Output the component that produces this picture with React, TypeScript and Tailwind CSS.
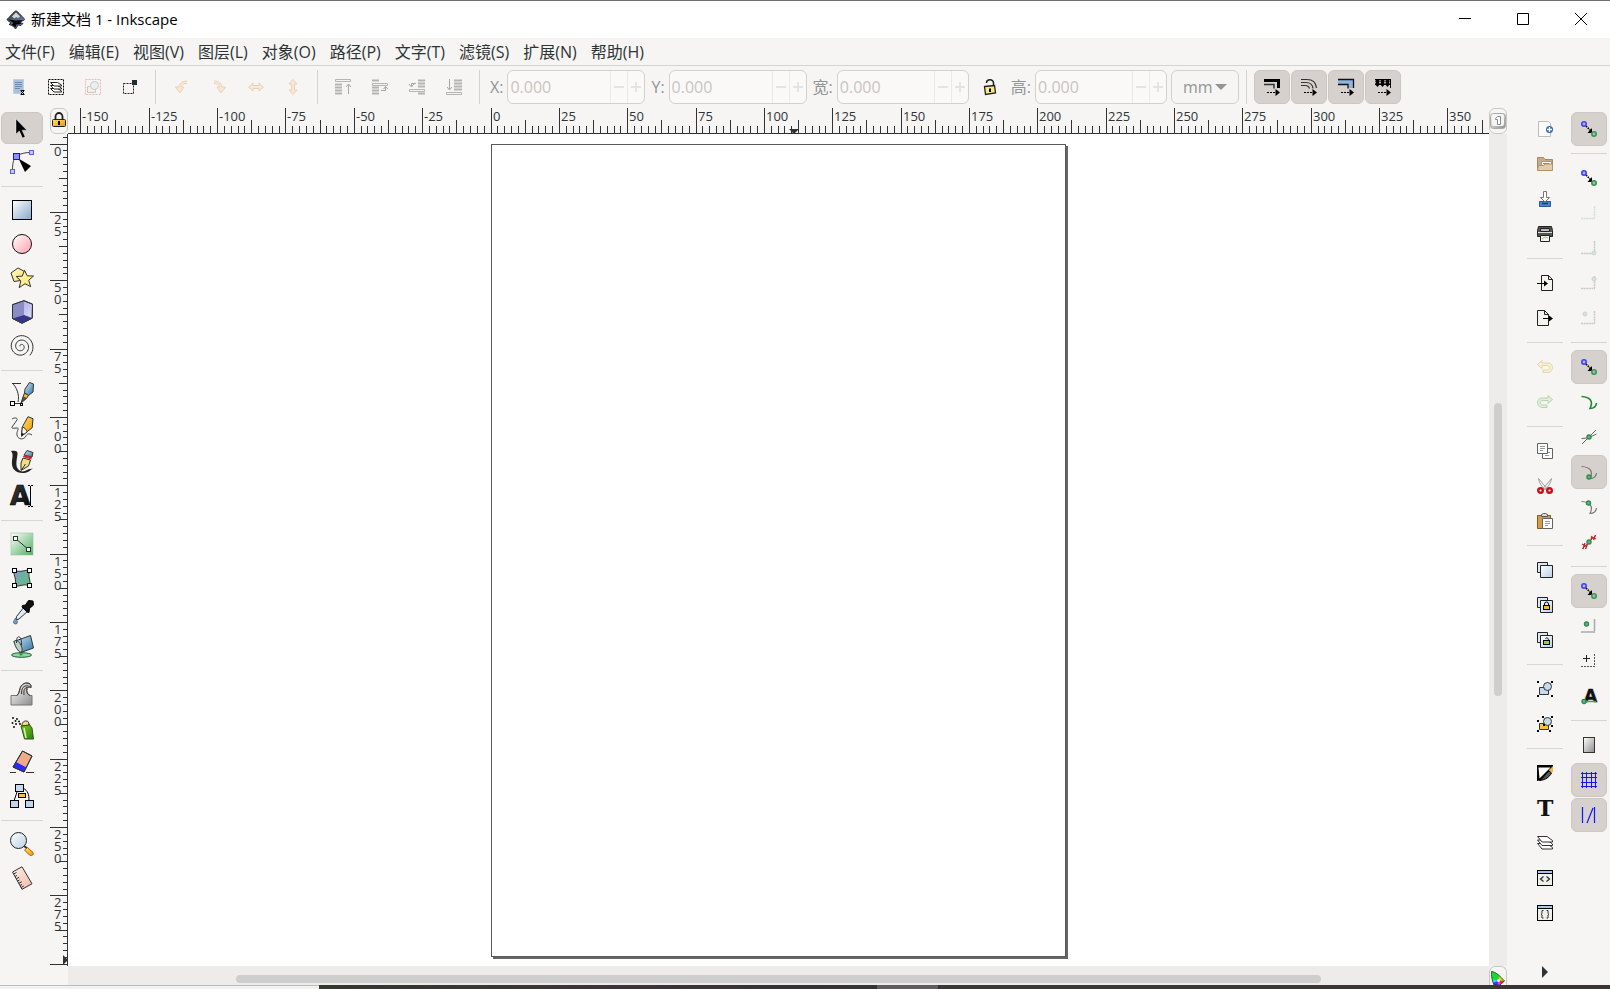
import { useLayoutEffect, useRef, useState, type ReactNode } from "react";

type Tool = { label: string; icon: ReactNode; on?: boolean; off?: boolean };

const MENUS = ["文件(F)", "编辑(E)", "视图(V)", "图层(L)", "对象(O)", "路径(P)", "文字(T)", "滤镜(S)", "扩展(N)", "帮助(H)"];

// 25 mm on screen, in pixels
const STEP = 68.35;

function spiralPath() {
  const turns = 2.6;
  const end = Math.PI / 4;
  const pts = Array.from({ length: 90 }, (_, i) => {
    const t = i / 89;
    const a = end - (1 - t) * turns * 2 * Math.PI;
    const r = 1 + 11.5 * t;
    return `${(11 + r * Math.cos(a)).toFixed(2)} ${(12.5 + r * Math.sin(a)).toFixed(2)}`;
  });
  return `M${pts.join("L")}`;
}

function Svg({ size = 16, children }: { size?: number; children: ReactNode }) {
  return (
    <svg width={size} height={size} viewBox={`0 0 ${size} ${size}`} fill="none" stroke="#2e3436" className="shrink-0 overflow-visible" aria-hidden="true">
      {children}
    </svg>
  );
}

function Gradients() {
  const list: [string, string, string][] = [
    ["blue", "#ffffff", "#85a8cc"],
    ["pink", "#ffffff", "#ff9fab"],
    ["yellow", "#fffbd0", "#ffe15a"],
    ["green", "#ffffff", "#4fae62"],
    ["teal", "#7f9fd0", "#5fbf6c"],
    ["cube", "#9a9ad6", "#e8e8ff"],
    ["gray", "#ffffff", "#8c8c8c"],
    ["bucket", "#d5ecf7", "#2f6f9f"],
    ["can", "#7ed321", "#2f7a12"],
    ["sky", "#ffffff", "#b9d0e6"],
    ["orange", "#ffe36e", "#f39200"],
    ["peach", "#fff0ea", "#f2b8a4"],
    ["ink", "#444444", "#000000"],
    ["logo", "#3a3a3a", "#6d94c4"],
  ];
  return (
    <svg className="absolute h-0 w-0" aria-hidden="true">
      <defs>
        {list.map(([id, a, b]) => (
          <linearGradient key={id} id={id} x1="0" y1="0" x2="1" y2="1">
            <stop offset="0" stopColor={a} />
            <stop offset="1" stopColor={b} />
          </linearGradient>
        ))}
      </defs>
    </svg>
  );
}

const toolGroups: Tool[][] = [
  [
    {
      label: "选择",
      on: true,
      icon: <path d="M6 3v15l3.3-3 3.2 7 2.6-1.2-3-6.600h4.700z" fill="#000" stroke="#fff" strokeWidth=".4" />,
    },
    {
      label: "节点",
      icon: (
        <>
          <path d="M2.500 20C2.500 12 4 7 8 5.200 12 3.200 16 2.500 20 2.500" stroke="#444" />
          <path d="M8.500 8.500l12.500 7.500-6 6z" fill="#000" stroke="none" />
          <rect x="3.500" y="3.500" width="6" height="6" fill="#8f8fff" stroke="#1414d8" />
          <rect x="19.500" y=".5" width="4" height="4" fill="#c4c4ff" stroke="#5a5aff" />
          <rect x=".5" y="19.500" width="4" height="4" fill="#c4c4ff" stroke="#5a5aff" />
        </>
      ),
    },
  ],
  [
    { label: "矩形", icon: <rect x="2.500" y="2.500" width="19" height="19" fill="url(#blue)" stroke="#000" /> },
    { label: "椭圆", icon: <circle cx="12" cy="12" r="9.500" fill="url(#pink)" stroke="#111" /> },
    {
      label: "星形",
      icon: (
        <>
          <path d="M8 2l7.500 4-1.500 8-10 1.500L1 7z" fill="url(#yellow)" stroke="#333" />
          <path d="M14.500 4.500l2.800 5.300 6.200.2-4.800 4.300 2 6.400-5.700-3-5.800 4 1.600-6.800-4.600-4.400 6-.4z" fill="url(#yellow)" stroke="#333" />
        </>
      ),
    },
    {
      label: "3D 盒子",
      icon: (
        <>
          <path d="M2.500 4.700L14 .7l8.500 3.500-.3 14L12 23.300 2.500 18.500z" fill="url(#cube)" />
          <path d="M3 5l11-4v14L3 18.500z" fill="#8c8cc4" stroke="none" />
          <path d="M3 18.300L14 15l8 3-10 5z" fill="#35358c" stroke="none" />
          <path d="M2.500 4.700L14 .7l8.500 3.500-.3 14L12 23.300 2.500 18.500z" />
        </>
      ),
    },
    { label: "螺旋", icon: <path d={spiralPath()} /> },
  ],
  [
    {
      label: "钢笔",
      icon: (
        <>
          <path d="M2 1.500h9M2.500 1.500C6 4 10 13 8 20M4 21.500h7" />
          <path d="M15 7L19.500.5 23.500 2l-.5 8-4.500 3.500-4-2.500z" fill="url(#bucket)" />
          <path d="M14.500 11l4 2.500-2 3-3.500-1.500z" fill="#f5b82e" />
          <path d="M13 15l-2 6 5.500-4.500" fill="#555" />
          <rect x=".5" y="19.500" width="4" height="4" fill="#fff" stroke="#000" />
          <rect x="10.500" y="21.500" width="2" height="2" fill="#fff" stroke="#000" />
        </>
      ),
    },
    {
      label: "铅笔",
      icon: (
        <>
          <path d="M2 3c3-2 6-1 5 1L2 11c-1 2 3 1 5 1 3 0-1 4 0 7 1 5 7 5 9 1 1-2 3-3 6-1" stroke="#444" />
          <path d="M11.500 20l1-9.500L18 .7l5 2-.8 9z" fill="url(#orange)" />
          <path d="M11.500 20l.8-9c2.500.5 4 2.500 5 5z" fill="#fff6dc" />
          <path d="M11.500 20l.3-3 2 1.300z" fill="#000" />
        </>
      ),
    },
    {
      label: "书法",
      icon: (
        <>
          <path d="M1 1c4-.5 7-.5 6.500 3C7 9 5 15 8 19c2 3 6 3 9 1 2-1.500 4-1 6-1.500-3 1.500-4 4-9 4.500C6 23.500 1 19 2 11c.4-4 1.500-7-1-10z" fill="#222" stroke="none" />
          <path d="M14 5l3-4.500 6 2L22 7z" fill="url(#bucket)" />
          <path d="M14 5l8 2-.8 2.500L13 7z" fill="#d5222c" stroke="none" />
          <path d="M13 8l7.500 2-2 6-7.500 4.500V13z" fill="#f9dc7a" />
          <path d="M11.500 20l4-6" />
        </>
      ),
    },
    {
      label: "文本",
      icon: (
        <>
          <text x="0" y="21" fontFamily="DejaVu Sans" fontWeight="700" fontSize="26" fill="url(#ink)" stroke="#000" strokeWidth=".7">A</text>
          <path d="M18 1.500h2M21 1.500h2M20.500 2v20M18 22.500h2M21 22.500h2" stroke="#000" />
        </>
      ),
    },
  ],
  [
    {
      label: "渐变",
      icon: (
        <>
          <rect x="1" y="1" width="22" height="22" fill="url(#green)" stroke="#8fc69a" strokeWidth=".6" />
          <path d="M6 7l12 10" />
          <rect x="3.500" y="4.500" width="4" height="4" fill="#fff" />
          <rect x="16.500" y="15.500" width="4" height="4" fill="#fff" />
        </>
      ),
    },
    {
      label: "网格",
      icon: (
        <>
          <path d="M4 4c6 3 10 0 16 0-3 6 1 10 0 16-6-3-10 1-16 0 4-6-1-10 0-16z" fill="url(#teal)" />
          {[[2.5, 2.5], [17.5, 2.5], [2.5, 17.5], [17.5, 17.5]].map(([x, y]) => (
            <rect key={`${x}-${y}`} x={x} y={y} width="4" height="4" fill="#fff" stroke="#000" />
          ))}
        </>
      ),
    },
    {
      label: "取色器",
      icon: (
        <>
          <path d="M14 7l4 4L9 19l-3 1 .5-3.500z" fill="#dcebf7" />
          <path d="M12.500 5.500l3-.5 3-4.500 4.500.5.500 4-4 3.500-.5 4-2-.5-5-5z" fill="#111" stroke="#000" />
          <path d="M5.500 18c-1 2-2 3-2 4a2 2 0 0 0 4 0c0-1-1-2-2-4z" fill="#6f9ed0" stroke="#456" strokeWidth=".7" />
        </>
      ),
    },
    {
      label: "填充",
      icon: (
        <>
          <ellipse cx="11.500" cy="21" rx="10" ry="2.300" fill="#8fd6a0" stroke="#1f5f2d" />
          <path d="M8 15c2 1 2 3 2 6h2c0-3 1-3 1-4" fill="#5dbb70" stroke="#1f5f2d" strokeWidth=".7" />
          <path d="M4 7.500L20.500 1.500 23.500 14 11 18.500z" fill="url(#bucket)" />
          <path d="M4 7.500c1-1.500 4-1.500 6 2s3 7 1 9c-3-1-6-6-7-11z" fill="#b7d2c0" />
          <path d="M6.500 9c0-5 1-7 3-6s2 5 2 8" />
        </>
      ),
    },
  ],
  [
    {
      label: "微调",
      icon: (
        <>
          <path d="M1 13.500h5.500c2.500-1 2.500-4 3.500-7C11 3 14 .8 17 1c3 0 4.500 2 4 4.500-1.500-1-3.500-.5-4 1-.8 3 .5 6 3 7h2V23H1z" fill="url(#gray)" stroke="#777" />
          <path d="M6.500 13.500c2.500-1 2.500-4 3.500-7C11 3 14 .8 17 1c3 0 4.500 2 4 4.500-1.500-1-3.500-.5-4 1-.8 3 .5 6 3 7M11.500 12c0-6 2-9 7-8M14 13c-.5-5 .5-7 3-7.500" stroke="#333" />
        </>
      ),
    },
    {
      label: "喷绘",
      icon: (
        <>
          <path d="M11 10l8-2 3 4 1.500 11h-9z" fill="url(#can)" stroke="#2a5a18" />
          <path d="M12 10c0-4 2-5 4-5s3 1 3 4z" fill="#f5d68a" />
          <path d="M14 12l2 10" stroke="#d8f5b8" strokeWidth="1.500" />
          {[[3, 2], [7, 3], [2.5, 7], [5.5, 5], [9, 5.5], [6, 8], [4, 11], [10, 8]].map(([x, y]) => (
            <circle key={`${x}-${y}`} cx={x} cy={y} r="1" fill="#111" stroke="none" />
          ))}
        </>
      ),
    },
    {
      label: "橡皮",
      icon: (
        <>
          <path d="M12.500 1L22 6l-8 16-11-5z" fill="#f0a98a" />
          <path d="M6 12l10.500 5.500L13.500 22 3 17z" fill="#2a2aff" stroke="none" />
          <path d="M12.500 1L22 6l-8 16-11-5zM0 22.500h6M16 22.500h8" />
        </>
      ),
    },
    {
      label: "连接器",
      icon: (
        <>
          <path d="M7 8L4 17M13 4c5 3 6 6 6 13" stroke="#000" />
          <rect x="5.500" y=".5" width="8" height="7" fill="#c8dbec" stroke="#000" />
          <rect x="8.500" y="9.500" width="7" height="4" fill="#f7c040" stroke="#000" />
          <rect x=".5" y="16.500" width="8" height="7" fill="#bcd4ee" stroke="#000" />
          <rect x="15.500" y="16.500" width="8" height="7" fill="#bcd4ee" stroke="#000" />
        </>
      ),
    },
  ],
  [
    {
      label: "缩放",
      icon: (
        <>
          <path d="M14 14l4 3" strokeWidth="2" />
          <path d="M14.500 18l3-2.500 5.500 5c1 2-1 3.500-3 3z" fill="url(#orange)" stroke="#a85c00" />
          <circle cx="8.500" cy="8.500" r="8" fill="url(#sky)" stroke="#222" />
        </>
      ),
    },
    {
      label: "测量",
      icon: (
        <path d="M2.500 6L12 .8l10 17L12 23.300zM3.500 8l3-1.500M5 10.500l2-1M6.200 12.800l3-1.500M7.500 15l2-1M8.800 17.300l3-1.500M10 19.500l2-1M11.200 21.500l2.500-1.500" fill="url(#peach)" />
      ),
    },
  ],
];

const UNDO = "M.5 5.500L5 1.500v2.500h6c6 0 6 9.500-.5 9.500H6v-2.500h4.500c3 0 3-4.500 0-4.500H5v3z";

const commandGroups: Tool[][] = [
  [
    {
      label: "新建",
      icon: (
        <>
          <path d="M1.500.5h10l2 2v13h-12z" fill="#fbfbfa" stroke="#bcbcb8" />
          <circle cx="12.500" cy="8.500" r="3.500" fill="#2f66ad" stroke="none" />
          <path d="M10 8.500h5M12.500 6v5" stroke="#fff" strokeWidth="1.400" />
        </>
      ),
    },
    {
      label: "打开",
      icon: (
        <>
          <path d="M.5 14V1.500h6l1.500 2h7.500V14z" fill="#c8ab84" stroke="#a68a63" />
          <path d="M4.500 9V5.500h10V9" fill="#fff" stroke="#999" />
          <path d="M6 7.500h6" stroke="#888" />
          <path d="M.5 14.500l1-5h5l1.500-1.500h7.500v6.500z" fill="#e6cba8" stroke="#b2936b" />
        </>
      ),
    },
    {
      label: "保存",
      icon: (
        <>
          <path d="M2.500 10.500h11v5h-11z" fill="#4a86cf" stroke="#285b9b" />
          <path d="M5 12.500h6" stroke="#163a68" strokeWidth="1.500" />
          <path d="M6.500.5h3v6h3l-4.500 4.500-4.500-4.500h3z" fill="#fff" stroke="#777" />
        </>
      ),
    },
    {
      label: "打印",
      icon: (
        <>
          <path d="M1.500.5h13l1 4v6h-15v-6z" fill="#555" stroke="#222" />
          <path d="M3.500 2.500h9v3h-9z" fill="#bbb" stroke="#222" />
          <path d="M1 6.500h14" stroke="#ddd" />
          <path d="M3.500 9.500h9v6h-9z" fill="#f1f7ea" stroke="#222" />
          <path d="M5 13l3-2 3 1" stroke="#9cc47c" />
        </>
      ),
    },
  ],
  [
    {
      label: "导入",
      icon: (
        <>
          <path d="M4.500.5h7l4 4v11h-11z" fill="#f4f4ee" stroke="#222" />
          <path d="M11.500.5v4h4" stroke="#222" />
          <path d="M0 8.500h8" stroke="#000" />
          <path d="M7 5.500l4 3-4 3z" fill="#000" stroke="none" />
        </>
      ),
    },
    {
      label: "导出",
      icon: (
        <>
          <path d="M.5.500h7l4 4v11h-11z" fill="#f4f4ee" stroke="#222" />
          <path d="M7.500.5v4h4" stroke="#222" />
          <path d="M6 8.500h8" stroke="#000" />
          <path d="M12 5.500l4 3-4 3z" fill="#000" stroke="none" />
        </>
      ),
    },
  ],
  [
    { label: "撤消", off: true, icon: <path d={UNDO} stroke="#d0a520" fill="#fbeab0" /> },
    { label: "重做", off: true, icon: <path d={UNDO} transform="matrix(-1 0 0 1 16 0)" stroke="#5aa342" fill="#c8e8b8" /> },
  ],
  [
    {
      label: "复制",
      icon: (
        <>
          <path d="M5.500 5.500h10v10h-10z" fill="#fff" stroke="#5e6662" />
          <path d="M8 9.500h5M8 12.500h4" stroke="#999" />
          <path d="M.5.500h10v10H.5z" fill="#fff" stroke="#5e6662" />
          <path d="M3 3.500h5M3 5.500h5M3 7.500h3" stroke="#999" />
        </>
      ),
    },
    {
      label: "剪切",
      icon: (
        <>
          <path d="M1.500.5l8 9.500-1.500 1.500C5 9 2 5 1.500.500zM14.500.5l-8 9.500L8 11.500c3-2.500 6-6.500 6.500-11z" fill="#f2f2f2" stroke="#8b8b8b" strokeWidth=".8" />
          <circle cx="3.500" cy="12.500" r="2.300" stroke="#cc0f1c" strokeWidth="2.400" />
          <circle cx="12.500" cy="12.500" r="2.300" stroke="#cc0f1c" strokeWidth="2.400" />
        </>
      ),
    },
    {
      label: "粘贴",
      icon: (
        <>
          <path d="M.5 2.500h13v13H.500z" fill="#d99a45" stroke="#8a5a1a" />
          <path d="M4.500 3.500v-2l2-1h2l2 1v2z" fill="#ddd" stroke="#555" />
          <path d="M5.500 5.500h10v10h-10z" fill="#fff" stroke="#5e6662" />
          <path d="M8 8.500h5M8 10.500h5M8 12.500h3" stroke="#999" />
        </>
      ),
    },
  ],
  [
    { label: "再制", icon: <Stacked /> },
    {
      label: "克隆",
      icon: (
        <>
          <Stacked />
          <path d="M7.500 9.500V7a2 2 0 0 1 4 0v2.500" stroke="#000" />
          <rect x="6.500" y="8.500" width="6" height="4" fill="#f7b52c" stroke="#000" />
        </>
      ),
    },
    {
      label: "取消克隆",
      icon: (
        <>
          <Stacked />
          <path d="M8.500 6.500c1.500-1.500 3 0 3 2" stroke="#000" />
          <rect x="6.500" y="8.500" width="6" height="4" fill="#8fd14f" stroke="#000" />
        </>
      ),
    },
  ],
  [
    {
      label: "组合",
      icon: (
        <>
          <path d="M2.500 6.500h9v7h-9z" fill="#c8dbec" />
          <circle cx="10.500" cy="5.500" r="4" fill="#c8dbec" />
          <Handles pts={[[0, 0], [14, 0], [0, 14], [14, 14]]} />
        </>
      ),
    },
    {
      label: "解除组合",
      icon: (
        <>
          <path d="M2.500 7.500h9v6h-9z" fill="#f9c33a" />
          <circle cx="10.500" cy="5.500" r="4" fill="#c8dbec" />
          <Handles pts={[[5, 0], [14, 0], [0, 4], [14, 9], [0, 14], [12, 14], [6, 8]]} />
        </>
      ),
    },
  ],
  [
    {
      label: "填充和描边",
      icon: (
        <>
          <path d="M0 0h16v3L5 15l-5 1z" fill="#000" stroke="none" />
          <path d="M1.500 2.500h12L2.500 13.500z" fill="#fff" stroke="none" />
          <path d="M16 1v6l-3 1-1-3z" fill="#f6b73c" stroke="none" />
          <path d="M12 6l2.500 2c-2 4-6 7-12 7.500 4-2 5-6 9.500-9.500z" fill="#555" stroke="#000" />
        </>
      ),
    },
    {
      label: "文字和字体",
      icon: <text x="0" y="16" fontFamily="DejaVu Serif" fontWeight="700" fontSize="22" fill="#111" stroke="none">T</text>,
    },
    {
      label: "图层",
      icon: (
        <>
          {[8.5, 5, 1.5].map((y) => (
            <path key={y} d={`M.5 ${y}h9.500l5.500 4v1.500H5z`} fill="#fff" stroke="#333" />
          ))}
        </>
      ),
    },
    {
      label: "XML 编辑器",
      icon: (
        <>
          <WindowFrame />
          <path d="M6.500 6.500l-3 2.500 3 2.500M9.500 6.500l3 2.500-3 2.500" strokeWidth="1.300" />
        </>
      ),
    },
    {
      label: "选择器和 CSS",
      icon: (
        <>
          <WindowFrame />
          <path d="M6.500 5.500h-1.500v3l-1 .8 1 .7v3h1.500M9.500 5.500H11v3l1 .8-1 .7v3H9.500" />
        </>
      ),
    },
  ],
];

const snapGroups: Tool[][] = [
  [{ label: "启用捕捉", on: true, icon: <SnapMain /> }],
  [
    { label: "捕捉边界框", icon: <SnapMain /> },
    { label: "捕捉边", off: true, icon: <path d="M0 13.500h14M13.500 1v12" stroke="#8fd09a" strokeWidth="1.500" strokeDasharray="2 .6" /> },
    { label: "捕捉角", off: true, icon: <DashCorner cx={13} cy={13} /> },
    { label: "捕捉边中点", off: true, icon: <DashCorner cx={13} cy={4} /> },
    { label: "捕捉中心", off: true, icon: <DashCorner cx={4} cy={4} /> },
  ],
  [
    { label: "捕捉节点", on: true, icon: <SnapMain /> },
    {
      label: "捕捉路径",
      icon: <path d="M.5 2.500c9 .5 12 5 8.500 12 4 0 6-2 6.500-5.500" stroke="#1f8a2c" strokeWidth="1.600" />,
    },
    {
      label: "捕捉路径交点",
      icon: (
        <>
          <path d="M1 15L15 1M.5 9.500c6 0 10-2 15-4.500" stroke="#666" />
          <Dot x={8} y={8} />
        </>
      ),
    },
    {
      label: "捕捉尖锐节点",
      on: true,
      icon: (
        <>
          <path d="M.5 2.500c9 .5 12 5 8.500 12 4 0 6-2 6.500-5.500" stroke="#777" strokeWidth="1.200" />
          <Dot x={8} y={13} />
        </>
      ),
    },
    {
      label: "捕捉平滑节点",
      icon: (
        <>
          <path d="M.5 2.500c9 .5 12 5 8.500 12 4 0 6-2 6.500-5.500" stroke="#777" strokeWidth="1.200" />
          <Dot x={7.5} y={4} />
        </>
      ),
    },
    {
      label: "捕捉线段中点",
      icon: (
        <>
          <path d="M1 15L15 1" stroke="#777" />
          <path d="M2 15l2-6M4.500 15l2-5M10 6l1-4M12.500 6l2-5M1 10l5 3M10 3l5 2" stroke="#cc1b22" strokeWidth="1.300" />
          <Dot x={8} y={8} />
        </>
      ),
    },
  ],
  [
    { label: "捕捉其他点", on: true, icon: <SnapMain /> },
    {
      label: "捕捉对象中心",
      icon: (
        <>
          <path d="M0 14h14M13.500 1v12" stroke="#aaa" strokeWidth="1.500" />
          <Dot x={5.5} y={6} />
        </>
      ),
    },
    {
      label: "捕捉旋转中心",
      icon: (
        <>
          <path d="M0 13.500h14M13.500 1v12" stroke="#555" strokeDasharray="2 1" />
          <path d="M2 5.500h7M5.500 2v7" stroke="#222" />
        </>
      ),
    },
    {
      label: "捕捉文字基线",
      icon: (
        <>
          <text x="3" y="14" fontFamily="DejaVu Sans" fontWeight="700" fontSize="17" fill="#111" stroke="#111" strokeWidth=".5">A</text>
          <path d="M4 13.500h11" stroke="#4aa457" strokeWidth="1.500" />
          <Dot x={3} y={13.5} />
        </>
      ),
    },
  ],
  [
    { label: "捕捉页面边界", icon: <rect x="2.500" y=".5" width="11" height="15" fill="url(#gray)" stroke="#333" /> },
    { label: "捕捉网格", on: true, icon: <path d="M1.500 0v16M5.500 0v16M10.500 0v16M14.500 0v16M0 1.500h16M0 5.500h16M0 10.500h16M0 14.500h16" stroke="#1414ff" /> },
    { label: "捕捉参考线", on: true, icon: <path d="M1.500 0v16M13.500 0v16M6 16L12 1" stroke="#1414ff" strokeWidth="1.200" /> },
  ],
];

function Stacked() {
  return (
    <>
      <path d="M.5.500h10v10H.5z" fill="#dbe7f2" stroke="#222" />
      <path d="M3.500 3.500h12v12h-12z" fill="url(#sky)" stroke="#222" />
    </>
  );
}

function Handles({ pts }: { pts: number[][] }) {
  return pts.map(([x, y]) => <rect key={`${x}-${y}`} x={x} y={y} width="2" height="2" fill="#000" stroke="none" />);
}

function WindowFrame() {
  return (
    <>
      <rect x=".5" y=".5" width="15" height="15" fill="#f0f0ea" stroke="#000" />
      <rect x="1" y="1" width="14" height="2" fill="#a9c4e4" stroke="none" />
      <path d="M1 3.500h14" stroke="#000" />
    </>
  );
}

function Dot({ x, y }: { x: number; y: number }) {
  return <circle cx={x} cy={y} r="2" fill="#7d9ad0" stroke="#27923a" strokeWidth="1.400" />;
}

function DashCorner({ cx, cy }: { cx: number; cy: number }) {
  return (
    <>
      <path d="M0 13.500h14M13.500 1v12" stroke="#8a8a8a" strokeWidth="1.500" strokeDasharray="2 .6" />
      <circle cx={cx} cy={cy} r="2" fill="#a8c8c0" stroke="#6fb583" />
    </>
  );
}

function SnapMain() {
  return (
    <>
      <path d="M5 5l5 5" stroke="#000" strokeWidth="1.600" strokeDasharray="1.500 1" />
      <path d="M11 7v5H6.500z" fill="#000" stroke="none" />
      <circle cx="3" cy="3" r="2.200" fill="#a9b4ff" stroke="#4040f0" strokeWidth="1.600" />
      <circle cx="13" cy="13" r="2.200" fill="#9fb6d8" stroke="#37984a" strokeWidth="1.600" />
    </>
  );
}

const arrowRow = (
  <>
    <path d="M3 13.500h9" stroke="#000" strokeDasharray="2 1" />
    <path d="M11.500 10l4.500 3.500-4.500 3.500z" fill="#000" stroke="none" />
  </>
);

const selectTools: Tool[] = [
  {
    label: "全选",
    icon: (
      <>
        <path d="M2.500.5h10v14h-10z" fill="#a9c1dd" stroke="#c3cfdd" />
        <path d="M4 3.500h7M4 5.500h7M4 7.500h7M4 9.500h5" stroke="#6d8db3" />
        <path d="M9.500 11.500h4M9.500 15.500h4M10 12l3 3M13 12l-3 3" stroke="#000" />
      </>
    ),
  },
  {
    label: "在所有图层中全选",
    icon: (
      <>
        <rect x=".5" y=".5" width="15" height="15" stroke="#000" strokeDasharray="2 1" />
        {[9.5, 6.5, 3.5].map((y) => (
          <path key={y} d={`M2.500 ${y}h7l4 2.500v1H6z`} fill="#fff" stroke="#222" />
        ))}
      </>
    ),
  },
  {
    label: "取消选择",
    off: true,
    icon: (
      <>
        <rect x=".5" y=".5" width="15" height="15" stroke="#e06060" strokeDasharray="2 1" />
        <path d="M2.500 7.500h8v6h-8z" fill="#f5ead0" stroke="#888" />
        <circle cx="9.500" cy="6.500" r="4" fill="#dfe6ec" stroke="#888" />
      </>
    ),
  },
  {
    label: "切换选择框",
    icon: (
      <>
        <rect x="1.500" y="4.500" width="10" height="10" stroke="#222" strokeDasharray="2 1" />
        <rect x="10" y="1" width="5" height="5" fill="#222b30" stroke="none" />
      </>
    ),
  },
];

const TURN = "M13 2C8 2 5 5 5 8H1.500l4.500 6 4-6H7.500C7.500 6 9 4.500 13 4.500";

const flipTools: Tool[] = [
  { label: "逆时针旋转 90 度", off: true, icon: <path d={TURN} fill="#f9d5a8" stroke="#e09a58" /> },
  { label: "顺时针旋转 90 度", off: true, icon: <path d={TURN} transform="matrix(-1 0 0 1 16 0)" fill="#f9d5a8" stroke="#e09a58" /> },
  { label: "水平翻转", off: true, icon: <path d="M.5 8L5 4v2.500h6V4l4.500 4-4.500 4V9.500H5V12z" fill="#f9d5a8" stroke="#e09a58" /> },
  { label: "垂直翻转", off: true, icon: <path d="M8 .5L4 5h2.500v6H4l4 4.500 4-4.500H9.500V5H12z" fill="#f9d5a8" stroke="#e09a58" /> },
];

const orderTools: Tool[] = [
  {
    label: "移至顶层",
    off: true,
    icon: (
      <>
        <path d="M.5.500h15v2H.5z" stroke="#555" />
        <path d="M0 5.500h7M0 8.500h7M0 11.500h7M0 14.500h7" stroke="#555" strokeWidth="2" />
        <path d="M13.500 15V5.500M11 8l2.500-3L16 8" stroke="#333" />
      </>
    ),
  },
  {
    label: "上移一层",
    off: true,
    icon: (
      <>
        <path d="M0 1.500h7M0 8.500h7M0 11.500h7M0 14.500h7" stroke="#555" strokeWidth="2" />
        <path d="M.5 4.500h15v2H.5z" stroke="#555" />
        <path d="M9 11.500h4.500V8M11.500 10l2-2.500L16 10" stroke="#333" />
      </>
    ),
  },
  {
    label: "下移一层",
    off: true,
    icon: (
      <>
        <path d="M9 1.500h7M9 4.500h7M9 7.500h7M9 14.500h7" stroke="#555" strokeWidth="2" />
        <path d="M.5 10.500h15v2H.5z" stroke="#555" />
        <path d="M7 4.500H2.500V7M0 5l2.500 3L5 5" stroke="#333" />
      </>
    ),
  },
  {
    label: "移至底层",
    off: true,
    icon: (
      <>
        <path d="M8 1.500h8M8 4.500h8M8 7.500h8M8 10.500h8" stroke="#555" strokeWidth="2" />
        <path d="M.5 13.500h15v2H.5z" stroke="#555" />
        <path d="M3.500 0v10.500M1 8l2.500 3L6 8" stroke="#333" />
      </>
    ),
  },
];

const scaleTools: Tool[] = [
  {
    label: "缩放描边宽度",
    on: true,
    icon: (
      <>
        <path d="M0 1.500h14.500v7.500" stroke="#000" strokeWidth="3" />
        <path d="M0 5.500h10v4" stroke="#333" strokeWidth="1.500" />
        {arrowRow}
      </>
    ),
  },
  {
    label: "缩放圆角",
    on: true,
    icon: (
      <>
        <path d="M0 .5h6c6 0 9 3 9.500 8.500M0 3.500h5c4 0 6.500 2 7 6M0 6.500h4c3 0 4 1 4.500 3" stroke="#333" strokeWidth="1.200" />
        {arrowRow}
      </>
    ),
  },
  {
    label: "变换渐变",
    on: true,
    icon: (
      <>
        <path d="M0 1h15v8h-5V5H0z" fill="#8fb4e0" stroke="none" />
        <path d="M0 .5h15.500v8.500M0 5.500h10v4" stroke="#111" strokeWidth="1.300" />
        {arrowRow}
      </>
    ),
  },
  {
    label: "变换图案",
    on: true,
    icon: (
      <>
        <path d="M0 .5h16M0 5.500h16M15.500 1v8" stroke="#000" />
        {[2.5, 7.5, 12.5].map((x) => (
          <path key={x} d={`M${x} 0l2.500 2-1 1.500 1 1.500-2.500 3-2.500-3 1-1.500-1-1.500z`} fill="#000" stroke="none" />
        ))}
        {arrowRow}
      </>
    ),
  },
];

function BarTools({ tools }: { tools: Tool[] }) {
  return (
    <div className="flex">
      {tools.map((t) => (
        <button key={t.label} type="button" aria-label={t.label} disabled={t.off} className={`flex h-[34px] w-[37px] items-center justify-center ${t.off ? "opacity-40" : ""}`}>
          <Svg>{t.icon}</Svg>
        </button>
      ))}
    </div>
  );
}

function BarSeparator() {
  return <div className="h-[34px] w-px bg-[#d5d3d1]" />;
}

function GroupSeparator() {
  return (
    <div className="h-[14px] pt-[6px]">
      <div className="h-px bg-[#d8d6d4]" />
    </div>
  );
}

function SideBar({ label, groups }: { label: string; groups: Tool[][] }) {
  return (
    <div role="toolbar" aria-label={label} className="flex w-9 flex-col pt-1">
      {groups.map((group, i) => (
        <div key={i}>
          {i > 0 && <GroupSeparator />}
          {group.map((t) => (
            <button
              key={t.label}
              type="button"
              aria-label={t.label}
              disabled={t.off}
              className={`mb-px flex h-[34px] w-9 items-center justify-center rounded-md border ${t.on ? "border-[#cdc7c2] bg-[#d6d1cd]" : "border-transparent"} ${t.off ? "opacity-40" : ""}`}
            >
              <Svg>{t.icon}</Svg>
            </button>
          ))}
        </div>
      ))}
    </div>
  );
}

function NumberField({ id, label, wide }: { id: string; label: string; wide?: boolean }) {
  return (
    <div className="flex items-center gap-1">
      <label htmlFor={id} className="text-base text-[#929595]">{label}</label>
      <div className={`flex h-[34px] rounded-md border border-[#d5d0cc] bg-[#faf9f8] text-[#e6e4e2] ${wide ? "w-[138px]" : "w-[132px]"}`}>
        <input id={id} defaultValue="0.000" disabled className="min-w-0 flex-1 bg-transparent pl-[2px] text-base text-[#c8c4c0]" />
        <button type="button" disabled aria-label={`${label} −`} className="flex w-[17px] items-center justify-center border-l border-[#eceae8]">
          <svg width="10" height="10" stroke="currentColor" strokeWidth="2"><path d="M0 5h10" /></svg>
        </button>
        <button type="button" disabled aria-label={`${label} +`} className="flex w-[17px] items-center justify-center border-l border-[#eceae8]">
          <svg width="10" height="10" stroke="currentColor" strokeWidth="2"><path d="M0 5h10M5 0v10" /></svg>
        </button>
      </div>
    </div>
  );
}

function tickLength(n: number, sizes: [number, number, number]) {
  if (n % 10 === 0) return sizes[0];
  return n % 5 === 0 ? sizes[1] : sizes[2];
}

// Ticks that fit between `origin` and the end of a ruler of the given length
function ticksFor(origin: number, first: number, length: number) {
  const last = Math.floor(((length - 1 - origin) * 10) / STEP);
  return Array.from({ length: Math.max(0, last - first + 1) }, (_, i) => i + first);
}

function useSize() {
  const ref = useRef<SVGSVGElement>(null);
  const [size, setSize] = useState({ width: 0, height: 0 });
  useLayoutEffect(() => {
    const el = ref.current;
    if (!el) return;
    const measure = () => {
      const box = el.getBoundingClientRect();
      setSize({ width: box.width, height: box.height });
    };
    measure();
    const observer = new ResizeObserver(measure);
    observer.observe(el);
    return () => observer.disconnect();
  }, []);
  return { ref, ...size };
}

function HorizontalRuler() {
  const { ref, width } = useSize();
  const ticks = ticksFor(422.5, -61, width);
  const at = (n: number) => Math.round(422.5 + (n * STEP) / 10);
  return (
    <svg ref={ref} className="h-[26px] w-full" role="img" aria-label="水平标尺">
      {ticks.map((n) => {
        const len = tickLength(n, [25, 13, 7]);
        return <rect key={n} x={at(n)} y={25 - len} width="1" height={len} fill="#2e3436" />;
      })}
      {ticks.filter((n) => n % 10 === 0).map((n) => (
        <text key={n} x={at(n) + 2} y="13" fontSize="13" fill="#2e3436">{n * 2.5}</text>
      ))}
      <rect x="0" y="25" width="100%" height="1" fill="#2e3436" />
      <path d="M721 21h10l-5 5z" fill="#2e3436" />
    </svg>
  );
}

function VerticalRuler() {
  const { ref, height } = useSize();
  const ticks = ticksFor(10, -1, height);
  const at = (n: number) => Math.floor(10 + (n * STEP) / 10);
  return (
    <svg ref={ref} className="h-full w-[18px]" role="img" aria-label="垂直标尺">
      {ticks.map((n) => {
        const len = tickLength(n, [18, 9, 5]);
        return <rect key={n} x={18 - len} y={at(n)} width={len} height="1" fill="#2e3436" />;
      })}
      {ticks.filter((n) => n % 10 === 0 && at(n) + 40 < height).map((n) =>
        String(n * 2.5).split("").map((d, i) => (
          <text key={`${n}-${i}`} x="4" y={at(n) + 12 + i * 12} fontSize="13" fill="#2e3436">{d}</text>
        ))
      )}
      <rect x="17" y="0" width="1" height="100%" fill="#2e3436" />
      <path d="M13 821v10l5-5z" fill="#2e3436" />
    </svg>
  );
}

export default function App() {
  return (
    <div className="flex h-screen flex-col overflow-hidden bg-[#f6f5f4] font-['Open_Sans','Noto_Sans_CJK_SC',sans-serif] text-[15px] text-[#2e3436]">
      <Gradients />

      {/* Title bar */}
      <header className="flex h-[38px] shrink-0 items-center border-t border-[#6f6f6f] bg-white pl-[7px] text-black">
        <Svg size={18}>
          <path d="M9 0c1 0 2 1 8 7.500 1 1.500 0 2-2 2.500l-2 1.500 3 1-2 2-3-.5-2 3.500c-2 0-2-2-4-3l-3-1 2-1.500L.7 9.500C0 9 0 8 1 7.500 7 1 8 0 9 0z" fill="url(#logo)" stroke="#111" strokeWidth=".8" />
          <path d="M9 1.500l4 4-2 1.500-2-1-1.500 1.500L5 5.500z" fill="#d8d8d8" stroke="none" />
          <path d="M1.500 8.500l7 1 7-.5-3 2.500 2 1.500-5 .5-1 3-4-3 2-1.500z" fill="#000" stroke="none" />
        </Svg>
        <h1 className="ml-[6px] flex-1">新建文档 1 - Inkscape</h1>
        <div className="flex h-full pb-px">
          <button type="button" aria-label="最小化" className="flex w-[58px] items-center justify-center">
            <svg width="12" height="12" stroke="#000"><path d="M0 5.500h12" /></svg>
          </button>
          <button type="button" aria-label="最大化" className="flex w-[58px] items-center justify-center">
            <svg width="12" height="12" stroke="#000" fill="none"><path d="M.5.500h11v11H.5z" /></svg>
          </button>
          <button type="button" aria-label="关闭" className="flex w-[58px] items-center justify-center">
            <svg width="12" height="12" stroke="#000"><path d="M0 0l12 12M12 0L0 12" /></svg>
          </button>
        </div>
      </header>

      {/* Menu bar */}
      <nav className="flex h-7 shrink-0 items-center gap-[14px] border-b border-[#d5d3d1] pl-[5px] text-base">
        {MENUS.map((m) => (
          <button key={m} type="button" className="whitespace-nowrap">{m}</button>
        ))}
      </nav>

      {/* Tool controls */}
      <div className="flex h-[42px] shrink-0 items-start pt-1">
        <BarTools tools={selectTools} />
        <div className="mx-[7px]"><BarSeparator /></div>
        <BarTools tools={flipTools} />
        <div className="mx-[6px]"><BarSeparator /></div>
        <BarTools tools={orderTools} />
        <div className="ml-[7px] mr-[10px]"><BarSeparator /></div>
        <div className="flex items-center gap-[6px]">
          <NumberField id="pos-x" label="X:" wide />
          <NumberField id="pos-y" label="Y:" wide />
          <NumberField id="width" label="宽:" />
        </div>
        <button type="button" aria-label="锁定宽高比" className="flex h-[34px] w-[42px] items-center justify-center">
          <Svg>
            <path d="M4.500 4c0-4 7-4.500 7 0v2.500" strokeWidth="1.500" stroke="#222" />
            <path d="M2.500 7.500l10-1 1 7.500-10 1.500z" fill="#f7e98a" stroke="#222" strokeWidth="1.300" />
            <path d="M8 9.500v3.500" stroke="#000" strokeWidth="2" />
          </Svg>
        </button>
        <NumberField id="height" label="高:" />
        <div className="relative ml-1">
          <select aria-label="单位" disabled className="h-[34px] w-[68px] appearance-none rounded-md border border-[#d5d0cc] bg-[#f6f5f4] pl-[11px] text-base text-[#929595] opacity-100">
            <option>mm</option>
          </select>
          <svg width="12" height="6" className="pointer-events-none absolute right-3 top-[14px]" fill="#929595"><path d="M0 0h12L6 6z" /></svg>
        </div>
        <div className="mx-[7px]"><BarSeparator /></div>
        <div className="flex gap-px">
          {scaleTools.map((t) => (
            <button key={t.label} type="button" aria-label={t.label} aria-pressed="true" className="flex h-[34px] w-9 items-center justify-center rounded-md border border-[#cdc7c2] bg-[#d6d1cd]">
              <Svg>{t.icon}</Svg>
            </button>
          ))}
        </div>
      </div>

      <main className="flex min-h-0 flex-1">
        {/* Toolbox */}
        <div role="toolbar" aria-label="工具箱" className="mr-[7px] flex w-[43px] shrink-0 flex-col pl-px pt-1">
          {toolGroups.map((group, i) => (
            <div key={i}>
              {i > 0 && <GroupSeparator />}
              {group.map((t) => (
                <button
                  key={t.label}
                  type="button"
                  aria-label={t.label}
                  className={`mb-0.5 flex h-8 w-full items-center justify-center rounded-md border ${t.on ? "border-[#cdc7c2] bg-[#d6d1cd]" : "border-transparent"}`}
                >
                  <Svg size={24}>{t.icon}</Svg>
                </button>
              ))}
            </div>
          ))}
        </div>

        {/* Rulers, canvas and scroll bars */}
        <div className="grid min-w-0 flex-1 grid-cols-[18px_minmax(0,1fr)_18px] grid-rows-[26px_minmax(0,1fr)_19px]">
          <button type="button" aria-label="锁定参考线" className="flex items-center justify-center rounded-md border border-[#cdc7c2]">
            <Svg>
              <path d="M4.500 7V3.500a3.500 3.500 0 0 1 7 0V7" stroke="#222" strokeWidth="1.800" />
              <rect x="1.500" y="6.500" width="13" height="7" rx="1" fill="url(#orange)" stroke="#222" />
              <path d="M8 8v4" stroke="#000" strokeWidth="2" />
            </Svg>
          </button>
          <HorizontalRuler />
          <button type="button" aria-label="显示缩放" className="flex items-center justify-center rounded-md border border-[#cdc7c2]">
            <Svg>
              <rect x=".5" y=".5" width="15" height="15" rx="3" fill="url(#gray)" stroke="#aaa" />
              <rect x="2" y="1" width="12" height="12" rx="2" fill="#f4f4f4" stroke="none" />
              <path d="M5.500 5.500l2-2h3v8h-3v-5h-2z" fill="#fff" stroke="#888" />
            </Svg>
          </button>

          <VerticalRuler />
          <div className="overflow-hidden bg-white">
            <div className="ml-[423px] mt-[10px] h-[813px] w-[575px] border border-[#5a5a5a] bg-white shadow-[2px_2px_0_#666]" />
          </div>
          <div className="flex flex-col items-center bg-[#edecea]">
            <div className="h-[32.3%]" />
            <div className="h-[35.2%] w-2 rounded-full bg-[#cecece]" />
          </div>

          <div />
          <div className="flex items-center bg-[#edecea]">
            <div className="w-[11.8%]" />
            <div className="mt-[7px] h-2 w-[76.4%] rounded-full bg-[#cecece]" />
          </div>
          <button type="button" aria-label="色彩管理" className="flex items-start justify-center rounded-t-md border border-b-0 border-[#cdc7c2] pt-1">
            <svg width="14" height="14" viewBox="0 0 14 14" aria-hidden="true">
              <path d="M.5.500c4 0 9 5 13 9.500L9 14H3C1 10 0 4 .5.500z" fill="#12dd2e" />
              <path d="M7.500 9.500L8 5c2 1.500 4 3.500 5.500 5z" fill="#f2c81e" />
              <path d="M7.500 9.500l6 .5L9 14z" fill="#ff1840" />
              <path d="M7.500 9.500L10 13l-1 1H6z" fill="#e83be8" />
              <path d="M7.500 9.500L6.500 14H3l-1-3z" fill="#2b3cff" />
              <path d="M7.500 9.500L2.200 12 1.200 8z" fill="#22d9e8" />
              <circle cx="7.500" cy="9.500" r="1.500" fill="#fff" />
              <path d="M.5.500c4 0 9 5 13 9.500L9 14H3C1 10 0 4 .5.500z" fill="none" stroke="#222" strokeWidth=".7" />
            </svg>
          </button>
        </div>

        {/* Commands and snapping */}
        <div className="flex shrink-0 gap-2 pl-5 pr-[3px]">
          <div className="flex flex-col items-center justify-between">
            <SideBar label="命令" groups={commandGroups} />
            <button type="button" aria-label="更多命令" className="mb-[7px]">
              <svg width="6" height="12" fill="#2e3436"><path d="M0 0l6 6-6 6z" /></svg>
            </button>
          </div>
          <SideBar label="捕捉" groups={snapGroups} />
        </div>
      </main>

      <footer className="flex h-1 shrink-0">
        <div className="w-[319px] border-t border-[#bdbdbd] bg-[#f1f1f1]" />
        <div className="flex-1 bg-gradient-to-r from-[#33382d] via-[#3d3338] to-[#333333]" />
        <div className="w-[61px] bg-[#5f5c5d]" />
        <div className="w-[672px] bg-[#3a3635]" />
      </footer>
    </div>
  );
}
